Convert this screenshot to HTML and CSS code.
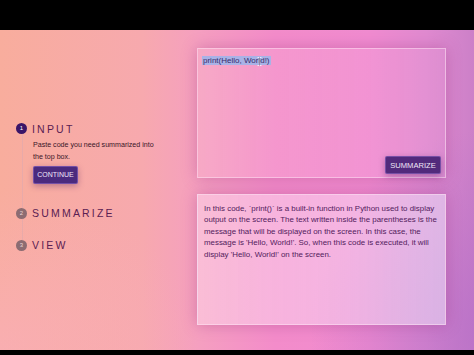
FILE: index.html
```html
<!DOCTYPE html>
<html>
<head>
<meta charset="utf-8">
<link rel="stylesheet" href="styles.css">
</head>
<body>
<div class="screen">
  <div class="bar-top"></div>
  <main class="stage">
    <section class="stepper">
      <div class="step">
        <div class="step-head">
          <span class="dot dot-active">1</span>
          <span class="label">INPUT</span>
        </div>
        <div class="step-body first">
          <p class="desc">Paste code you need summarized into the top box.</p>
          <button class="btn continue">CONTINUE</button>
        </div>
      </div>
      <div class="step">
        <div class="step-head">
          <span class="dot">2</span>
          <span class="label">SUMMARIZE</span>
        </div>
        <div class="step-body second"></div>
      </div>
      <div class="step">
        <div class="step-head">
          <span class="dot">3</span>
          <span class="label">VIEW</span>
        </div>
      </div>
    </section>
    <section class="panels">
      <div class="panel input-panel">
        <div class="code-line"><span class="selected">print(Hello, World!)</span><svg class="ibeam" width="5" height="9" viewBox="0 0 5 9"><path d="M0.5 0.5h1.5M3 0.5h1.5M2.5 0.8v7.4M0.5 8.5h1.5M3 8.5h1.5" stroke="#f4f0f8" stroke-width="0.9" fill="none"/><path d="M2.5 0.8v7.4" stroke="#3a2a5a" stroke-width="0.5"/></svg></div>
        <button class="btn summarize">SUMMARIZE</button>
      </div>
      <div class="panel output-panel">
        <p class="summary">In this code, `print()` is a built-in function in Python used to display output on the screen. The text written inside the parentheses is the message that will be displayed on the screen. In this case, the message is 'Hello, World!'. So, when this code is executed, it will display 'Hello, World!' on the screen.</p>
      </div>
    </section>
  </main>
  <div class="bar-bottom"></div>
</div>
</body>
</html>
```
FILE: styles.css
```css
* { box-sizing: border-box; }
html, body { margin: 0; padding: 0; background: #000; }
body { font-family: "Liberation Sans", Arial, sans-serif; }
.screen { width: 474px; height: 355px; display: flex; flex-direction: column; overflow: hidden; }
.bar-top { height: 30px; background: #000; flex: none; }
.bar-bottom { height: 5px; background: #000; flex: none; }
.stage {
  height: 320px; flex: none; display: flex;
  background:
    radial-gradient(ellipse 180px 200px at 490px 300px, rgba(180,110,200,0.75), rgba(180,110,200,0) 100%),
    radial-gradient(ellipse 200px 160px at 0px 320px, rgba(250,175,190,0.6), rgba(250,175,190,0) 100%),
    linear-gradient(to right, #f8ad9d 0%, #f7a9ae 30%, #f59fc0 42%, #f38cca 58%, #f08bd0 78%, #e08ad0 90%, #cc80c8 100%);
}
.stepper { width: 197px; flex: none; padding: 93px 0 0 16px; }
.step-head { display: flex; align-items: center; gap: 5px; height: 11px; }
.dot {
  width: 11px; height: 11px; border-radius: 50%; flex: none;
  background: #8c6c72; color: #e8d6d8; font-size: 6px; line-height: 11px; text-align: center;
}
.dot-active { background: #3a1568; color: #fff; }
.label { font-size: 10.5px; letter-spacing: 2.2px; color: #5a2052; line-height: 11px; padding-top: 1px; }
.step-body { margin-left: 5.5px; border-left: 1px solid rgba(230,170,170,0.9); padding-left: 10.5px; }
.step-body.first { padding-top: 6px; padding-bottom: 24px; }
.step-body.second { height: 21px; }
.desc { margin: 0; font-size: 7.1px; line-height: 11.7px; color: #3a1628; width: 125px; }
.btn {
  font-family: "Liberation Sans", Arial, sans-serif; border-radius: 2px; color: #f0e6f8;
  border: 1px solid rgba(150,110,200,0.55); cursor: pointer; padding: 0;
}
.continue {
  margin-top: 1px; width: 45px; height: 18px; font-size: 7px;
  background: #4b2a7e; box-shadow: 0 2px 6px rgba(70,20,90,0.35);
}
.panels { flex: none; width: 249px; padding-top: 18px; display: flex; flex-direction: column; gap: 16px; }
.panel {
  border: 1.5px solid rgba(255,230,245,0.5);
  box-shadow: 0 0 14px rgba(150,50,120,0.35);
}
.input-panel {
  height: 130px; position: relative; display: flex; flex-direction: column;
  background: linear-gradient(to right, rgba(255,220,225,0.16), rgba(255,200,235,0.1));
  padding: 7px 4px 3px 4px;
}
.code-line { position: relative; font-size: 8px; line-height: 9px; color: #3a2a6a; }
.selected { background: #a9b2e6; padding: 0 1px; }
.ibeam { position: absolute; left: 55px; top: 1px; }
.summarize {
  margin-top: auto; align-self: flex-end; width: 56px; height: 18px; font-size: 7.6px;
  background: #522a7c; box-shadow: 0 2px 6px rgba(70,20,90,0.35);
}
.output-panel {
  height: 131px;
  background: linear-gradient(to right, rgba(255,225,240,0.45), rgba(250,220,245,0.5) 60%, rgba(235,225,250,0.55));
  padding: 8px 4px 8px 6px;
}
.summary { margin: 0; font-size: 7.9px; line-height: 11.4px; color: #52205c; }
```
